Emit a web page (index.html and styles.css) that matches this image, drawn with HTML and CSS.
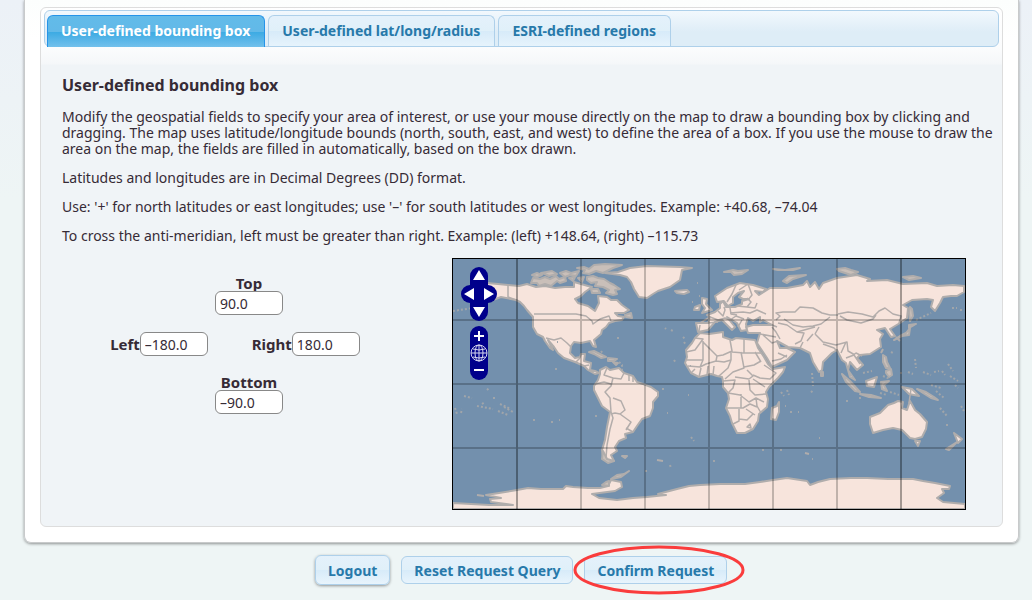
FILE: index.html
```html
<!DOCTYPE html>
<html lang="en">

<head>
    <meta charset="UTF-8">
    <meta name="viewport" content="width=device-width, initial-scale=1.0">
    <title>Geospatial Request</title>
    <link rel="stylesheet" href="styles.css">
</head>

<body>
    <main class="content">
        <div class="tabs">
            <nav class="tab-nav">
                <a class="tab active" href="#bbox">User-defined bounding box</a>
                <a class="tab" href="#radius">User-defined lat/long/radius</a>
                <a class="tab" href="#regions">ESRI-defined regions</a>
            </nav>

            <section class="tab-panel" id="bbox">
                <h3>User-defined bounding box</h3>
                <p>Modify the geospatial fields to specify your area of interest, or use your mouse directly on the map to draw a bounding box by clicking and dragging. The map uses latitude/longitude bounds (north, south, east, and west) to define the area of a box. If you use the mouse to draw the area on the map, the fields are filled in automatically, based on the box drawn.</p>
                <p>Latitudes and longitudes are in Decimal Degrees (DD) format.</p>
                <p>Use: '+' for north latitudes or east longitudes; use '–' for south latitudes or west longitudes. Example: +40.68, –74.04</p>
                <p>To cross the anti-meridian, left must be greater than right. Example: (left) +148.64, (right) –115.73</p>

                <div class="bbox-row">
                    <form class="bbox-form">
                        <div class="field stacked">
                            <label for="top">Top</label>
                            <input type="text" id="top" value="90.0">
                        </div>
                        <div class="middle">
                            <div class="field">
                                <label for="left">Left</label>
                                <input type="text" id="left" value="–180.0">
                            </div>
                            <div class="field">
                                <label for="right">Right</label>
                                <input type="text" id="right" value="180.0">
                            </div>
                        </div>
                        <div class="field stacked">
                            <label for="bottom">Bottom</label>
                            <input type="text" id="bottom" value="–90.0">
                        </div>
                    </form>

                    <div class="map">
                        <svg class="world" viewBox="0 0 512 250">
                            <rect width="512" height="250" fill="#7390ad" />
                            <g class="land">
                                <!-- North America -->
                                <path d="M17 31 L26 30 L20 28 L34 24 L45 25 L55 26 L66 27 L74 25 L83 28 L92 27 L102 29 L112 28 L121 28 L121 23 L128 25 L135 27 L139 28 L132 33 L128 37 L122 40 L125 44 L135 47 L142 52 L144 48 L146 44 L145 37 L154 38 L158 41 L164 41 L169 46 L176 51 L171 54 L162 54 L165 57 L171 58 L169 61 L162 62 L156 64 L153 68 L149 71 L148 75 L141 81 L143 88 L140 87 L137 82 L128 84 L121 83 L118 87 L117 94 L122 99 L127 98 L128 95 L132 95 L131 102 L138 104 L137 111 L142 112 L146 114 L142 115 L135 111 L131 107 L122 103 L111 99 L105 94 L101 88 L95 81 L100 91 L97 89 L92 82 L90 78 L84 75 L80 68 L80 58 L74 51 L71 47 L67 43 L63 41 L48 38 L40 41 L31 44 L23 48 L31 41 L21 37 L26 34 Z" />
                                <!-- Greenland and Iceland -->
                                <path d="M152 14 L165 13 L177 9 L194 7 L227 8 L239 9 L229 11 L227 21 L217 28 L205 32 L200 35 L194 39 L186 38 L181 30 L178 23 L174 18 L167 16 Z" />
                                <path d="M222 32 L234 31 L236 33 L231 35 L224 34 Z" />
                                <!-- South America -->
                                <path d="M147 111 L153 108 L157 111 L166 109 L171 114 L180 117 L184 123 L190 125 L198 128 L205 133 L205 137 L200 143 L200 149 L197 157 L189 160 L184 167 L180 173 L172 175 L173 179 L166 182 L162 188 L164 192 L158 196 L161 202 L155 202 L150 198 L149 191 L152 181 L154 168 L157 153 L149 147 L146 141 L141 131 L141 127 L145 121 L147 115 Z" />
                                <!-- Africa -->
                                <path d="M247 74 L256 75 L270 73 L270 78 L279 81 L283 79 L302 81 L305 89 L311 98 L315 105 L320 110 L332 108 L330 113 L325 119 L316 128 L313 133 L315 140 L314 148 L306 155 L305 162 L300 170 L292 174 L284 174 L279 164 L277 157 L273 149 L276 140 L275 134 L270 128 L270 122 L269 118 L264 117 L258 115 L246 118 L238 114 L232 104 L234 98 L233 91 L239 84 L242 79 Z" />
                                <path d="M326 143 L324 147 L319 149 L318 160 L323 161 L326 153 Z" />
                                <!-- Eurasia -->
                                <path d="M243 64 L255 64 L257 58 L254 56 L262 53 L267 49 L267 45 L270 42 L273 48 L282 48 L289 45 L289 42 L296 40 L290 40 L286 38 L291 32 L285 34 L280 38 L280 44 L275 47 L271 42 L264 43 L262 37 L274 29 L287 24 L300 26 L313 30 L310 33 L302 32 L306 36 L317 29 L334 29 L350 26 L354 22 L357 28 L362 23 L366 30 L370 24 L384 19 L404 16 L417 20 L414 22 L434 21 L450 25 L474 24 L484 27 L500 26 L511 27 L511 33 L504 37 L498 37 L490 38 L487 44 L482 52 L478 48 L480 41 L474 40 L459 41 L450 46 L455 49 L454 59 L447 64 L437 70 L442 77 L438 78 L434 72 L432 69 L424 71 L430 75 L427 80 L428 88 L417 95 L407 96 L404 99 L410 106 L404 111 L397 103 L395 111 L402 121 L397 118 L393 104 L389 101 L384 91 L379 94 L370 103 L369 111 L366 113 L360 103 L357 94 L347 89 L335 88 L324 82 L327 89 L334 89 L342 93 L334 101 L319 108 L314 99 L304 84 L307 74 L295 74 L293 68 L300 66 L319 66 L310 61 L307 63 L307 58 L300 62 L295 59 L293 65 L294 71 L288 72 L284 64 L274 58 L282 68 L279 71 L269 61 L262 63 L255 71 L245 73 Z" />
                                <!-- Australia and neighbours -->
                                <path d="M417 158 L422 156 L427 154 L435 146 L441 144 L445 142 L450 143 L449 149 L454 151 L457 142 L462 151 L467 155 L474 163 L473 170 L469 178 L462 180 L457 179 L449 171 L440 169 L430 171 L420 174 L417 165 Z" />
                                <path d="M462 182 L467 182 L465 187 Z M449 128 L459 130 L466 137 L456 135 Z M413 122 L424 118 L421 128 L414 127 Z" />
                                <path d="M501 174 L509 180 L505 184 Z M504 183 L496 191 L493 190 Z" />
                                <!-- Britain and Ireland -->
                                <path d="M249 39 L254 40 L253 45 L259 51 L249 54 L252 49 L249 45 Z M242 48 L247 46 L246 51 L241 51 Z" />
                                <!-- Antarctica -->
                                <path d="M0 244 L36 246 L60 246 L38 243 L37 240 L48 239 L33 236 L46 234 L64 231 L75 229 L88 230 L110 230 L113 227 L120 228 L135 229 L147 229 L155 227 L158 221 L168 223 L169 228 L162 232 L139 235 L146 239 L164 241 L180 239 L194 238 L213 236 L205 235 L224 230 L236 227 L247 226 L267 225 L292 225 L307 223 L320 221 L334 219 L354 222 L357 226 L365 223 L377 220 L398 219 L414 219 L435 220 L460 220 L470 222 L482 224 L497 227 L496 230 L489 230 L491 234 L484 239 L490 243 L512 245 L512 250 L0 250 Z" />
                            </g>
                            <!-- Arctic islands and archipelagos, mostly coastline at this scale -->
                            <g class="isles">
                                <path d="M78 24 L80 19 L87 20 L92 18 L97 20 L103 17 L106 20 L112 18 L113 22 L107 24 L104 22 L98 27 L92 25 L86 27 L84 24 Z M79 16 L84 14 L89 16 L84 18 Z M88 14 L99 12 L104 15 L96 17 L92 15 Z M107 14 L113 12 L118 14 L126 12 L123 17 L117 16 L112 18 Z M124 9 L131 8 L136 10 L141 6 L152 5 L169 6 L160 9 L150 14 L143 12 L136 15 L130 14 L132 11 Z M116 19 L122 18 L120 22 Z M125 19 L131 18 L129 23 Z M134 18 L140 17 L145 19 L151 20 L157 24 L161 26 L167 30 L162 31 L164 35 L160 36 L153 34 L156 31 L150 28 L142 27 L144 23 L138 24 L134 21 Z M138 30 L145 30 L147 34 L139 34 Z" />
                                <path d="M160 103 L165 104 L163 106 Z M136 93 L141 92 L147 95 L153 98 L148 99 L141 95 Z M155 99 L164 100 L161 102 L155 102 Z M172 56 L178 54 L179 59 L173 58 Z" />
                                <path d="M271 13 L280 11 L285 12 L295 11 L289 15 L281 16 L278 13 Z M330 22 L336 17 L353 16 L340 20 L334 24 Z M320 10 L332 11 L347 9 L340 11 L325 11 Z M384 10 L392 9 L398 11 L405 13 L398 16 L386 12 Z M450 18 L460 17 L468 19 L456 21 Z" />
                                <path d="M457 48 L459 50 L460 57 L457 62 L456 54 Z M456 66 L463 65 L456 69 Z M457 69 L456 76 L449 77 L441 81 L447 77 L453 74 Z M389 115 L397 122 L407 133 L402 132 L393 123 Z M407 135 L418 136 L428 139 L416 138 Z M428 123 L436 122 L431 126 L434 132 L429 130 Z M430 96 L433 98 L434 103 L437 109 L433 109 L430 103 Z M433 112 L438 110 L439 116 L436 118 L433 114 Z M464 130 L473 133 L481 138 L485 141 L478 139 L470 134 Z M368 113 L370 113 L370 117 L368 117 Z" />
                                <path d="M150 192 L154 200 L161 202 L155 204 L149 200 Z M169 197 L174 197 L172 199 Z M158 220 L164 216 L171 215 L176 212 L168 218 Z M149 226 L153 223 L156 222 L156 227 Z M204 201 L210 202 M352 194 L356 195 M24 236 L31 237 M443 78 L447 82 M428 94 L430 90" />
                            </g>
                            <g class="scatter">
                                <path d="M11 137 L19 139 M24 147 L40 150 M47 145 L58 150 M51 148 L60 153 M45 152 L55 156 M2 149 L4 155 M8 154 L9 150 M29 145 L32 143 M34 131 L36 129 M80 161 h2 M98 163 h2 M106 161 h1 M142 157 h3 M102 110 h2 M40 139 h3" />
                                <path d="M212 69 l1 1 M218 71 l2 1 M230 78 l2 2 M231 83 l2 3 M221 101 l2 3 M237 107 h1 M164 79 h2 M104 83 h1 M244 24 h1 M246 37 h1 M239 43 h1 M0 52 L20 49 M499 49 h5 M507 51 h4 M148 92 l2 3 M166 103 l3 3 l0 5" />
                                <path d="M438 93 l2 1 M462 100 l1 9 M447 114 h3 M455 113 l5 2 M470 113 l8 3 M481 113 l5 -1 M489 112 l3 4 M495 105 l5 7 M497 117 l8 5 M502 126 l3 3 M478 126 l10 3 M483 132 l8 7 M487 149 l7 8 M508 147 l3 5 M493 166 h2 M359 114 l1 13 M358 132 l2 2 M334 131 l2 5 M328 133 l3 4 M337 153 h2 M345 153 h1 M332 147 h1 M393 142 h2 M406 139 h2 M327 191 h3 M309 191 h2 M359 200 h1 M238 178 l3 4 M260 202 h2 M366 179 h1 M217 206 l1 3 M192 212 h2 M214 154 h1 M235 136 h1 M209 130 h3 M410 114 l9 -2 M427 134 l7 2 M437 133 l9 3 M430 117 l7 3 M463 61 L478 54" />
                            </g>
                            <!-- Country borders -->
                            <g class="borders">
                                <path d="M55 26 V38 L63 41 M81 55 H123 L133 57 L139 62 L140 65 L147 60 L156 57 L158 62 M93 79 L101 81 L108 79 L114 84 L118 88 M123 103 L127 99 M131 107 L136 106" />
                                <path d="M154 109 L151 116 L160 119 L158 127 L152 133 L157 139 L158 153 L160 159 L157 170 L154 186 L153 199 M142 125 L151 123 L158 125 M160 139 L168 142 L172 151 L167 155 L162 154 L158 155 M167 155 L178 163 L173 171 M171 114 L168 120 L160 119 M176 116 L176 122 M180 117 L180 123 M173 169 L180 173" />
                                <path d="M242 79 L250 80 L242 91 L233 93 M250 83 L264 97 L270 96 L279 92 L277 81 M291 80 V94 L279 93 M291 94 H309 M250 82 V101 L234 101 M250 101 L247 108 L235 107 M264 97 L263 102 L253 105 L247 108 M263 102 L271 103 L278 101 L278 93 M278 101 L275 109 L266 117 M288 93 L291 109 L280 113 L272 120 M291 108 L301 106 L308 102 M302 93 L308 103 M294 111 L300 117 L296 120 L282 118 M311 106 L323 114 L317 120 L307 119 L300 116 M300 120 L312 128 M296 121 L297 131 L302 136 L313 135 M270 122 L282 121 L280 129 L275 134 L287 136 L296 143 L303 139 L311 143 M273 149 H290 L297 145 L304 148 M286 150 V162 L280 165 M286 160 L294 161 L300 155 M293 150 L302 156 M288 135 V149 M303 139 L304 147 L308 154 M246 118 L248 109 M254 116 L255 107 M260 116 L261 107 M238 114 L242 110 M294 168 L297 165 L298 169 Z" />
                                <path d="M257 58 L247 64 M257 58 L265 61 L272 59 L277 61 L283 57 L291 60 M265 52 L270 57 L272 51 L271 48 M277 49 L278 55 L284 56 M277 54 L290 53 L297 54 L304 51 L313 55 M284 47 L294 48 L298 43 L294 39 M294 48 L302 49 L304 44 M295 25 L299 36 L295 41 M283 26 L279 35 L274 43 M295 25 L286 31 M289 61 L285 68 M247 66 L246 72 M255 64 L265 63 M317 65 L324 68 M319 68 L323 73 L327 80" />
                                <path d="M323 61 L327 57 L323 54 L330 53 L342 53 L347 48 L360 49 L369 54 L377 56 L385 56 M385 55 L395 53 L409 55 L420 58 L426 52 L432 49 L440 55 L448 57 L446 64 M387 57 L394 61 L408 64 L420 60 L423 56 M377 58 L368 65 L360 67 L350 68 L340 66 L331 60 M325 64 L334 66 L344 73 L351 74 L348 82 L342 85 M344 73 L362 68 M360 75 L354 82 M362 75 L370 83 L383 86 L394 83 L395 92 L402 96 M362 75 L366 68 M370 85 L381 89 L384 92 M393 83 L388 94 M393 99 L401 96 L407 105 M399 97 L403 94 L409 97 M307 75 L323 78 M310 76 L319 84 L325 82 M325 94 L334 98 M319 102 L328 100 L334 96 M456 144 L458 130 M350 83 L347 89" />
                            </g>
                            <!-- Graticule, every 45 degrees -->
                            <path class="grid" d="M64 0 V250 M128 0 V250 M192 0 V250 M256 0 V250 M320 0 V250 M384 0 V250 M448 0 V250 M0 61 H512 M0 125 H512 M0 189 H512" />
                            <path class="grid edge" d="M64 0 V250 M448 0 V250" />

                            <!-- Pan control -->
                            <g class="control">
                                <rect x="17" y="8" width="18" height="54" rx="9" />
                                <rect x="8" y="26" width="36" height="18" rx="9" />
                                <path class="mark" d="M26 11 L32 21 H20 Z M26 58 L32 48 H20 Z M11 35 L21 29 V41 Z M41 35 L31 29 V41 Z" />
                            </g>
                            <!-- Zoom control -->
                            <g class="control">
                                <rect x="17" y="67" width="18" height="54" rx="9" />
                                <path class="mark" d="M25 72 h2 v4 h4 v2 h-4 v4 h-2 v-4 h-4 v-2 h4 Z M21 110 h10 v2 h-10 Z" />
                                <g class="globe">
                                    <circle cx="26" cy="94" r="8" />
                                    <ellipse cx="26" cy="94" rx="4" ry="8" />
                                    <path d="M26 86 V102 M18 94 H34 M20 90 Q26 92 32 90 M20 98 Q26 100 32 98" />
                                </g>
                            </g>
                        </svg>
                    </div>
                </div>
            </section>
        </div>
    </main>

    <footer class="actions">
        <button type="button" class="btn raised">Logout</button>
        <button type="button" class="btn">Reset Request Query</button>
        <div class="confirm">
            <button type="button" class="btn">Confirm Request</button>
            <svg class="ring" viewBox="0 0 172 50">
                <ellipse cx="86" cy="25" rx="84" ry="23" />
            </svg>
        </div>
    </footer>
</body>

</html>
```
FILE: styles.css
```css
* {
    box-sizing: border-box;
}

body {
    margin: 0;
    font-family: "Noto Sans", "Open Sans", sans-serif;
    font-size: 14px;
    line-height: 16px;
    color: #362b36;
    background: linear-gradient(#ecf1f7, #eef5f5 200px);
}

.content {
    margin: 0 13px 0 24px;
    padding: 7px 15px 15px;
    background: linear-gradient(#fcfefd, #fff 40px);
    border: 1px solid #c8cacb;
    border-top: none;
    border-radius: 0 0 7px 7px;
    box-shadow: 0 1px 3px rgba(0, 0, 0, 0.4);
}

.tabs {
    padding: 2px 3px 16px;
    border: 1px solid #dddddd;
    border-radius: 6px;
    background: linear-gradient(#fff, #fbfcfd 40px, #f5f7f9 56px, #f0f4f7 57px);
}

.tab-nav {
    display: flex;
    gap: 3px;
    height: 37px;
    padding: 4px 2px 0;
    border: 1px solid #aed0ea;
    border-radius: 6px;
    background: linear-gradient(#f2f8fd, #deedf7 60%);
}

.tab {
    height: 31px;
    padding: 7px 14px 0 13px;
    border: 1px solid #aed0ea;
    border-bottom: none;
    border-radius: 6px 6px 0 0;
    background: linear-gradient(#e4f1fb, #e0f0f9 50%, #d7ebf9 51%, #e6f3fc);
    color: #2779aa;
    font-weight: bold;
    text-decoration: none;
    white-space: nowrap;
}

.tab.active {
    height: 32px;
    border-color: #2694e8;
    background: linear-gradient(#62bbe9, #62b9e8 50%, #3baae3 51%, #72c0ec);
    color: #fff;
}

.tab-panel {
    padding: 28px 2px 0 18px;
}

h3 {
    margin: 0 0 14px;
    font-size: 16px;
    line-height: 20px;
}

p {
    margin: 0 0 13px;
}

.bbox-row {
    display: flex;
    justify-content: space-between;
    padding: 1px 31px 0 0;
}

.bbox-form {
    width: 374px;
    padding-top: 17px;
}

.field {
    display: flex;
    align-items: center;
    font-size: 15px;
    font-weight: bold;
}

.stacked {
    flex-direction: column;
}

.middle {
    display: flex;
    justify-content: center;
    gap: 44px;
    margin: 17px 0 18px;
    padding-right: 28px;
}

input {
    width: 68px;
    height: 24px;
    padding: 0 4px;
    border: 1px solid #888;
    border-radius: 6px;
    background: #fff;
    color: #362b36;
    font-family: inherit;
    font-size: 14px;
}

.map {
    flex: 0 1 514px;
    border: 1px solid #000;
}

.world {
    display: block;
    width: 100%;
}

.land {
    fill: #f7e4dc;
    stroke: #b0adac;
    stroke-width: 2;
    stroke-linejoin: round;
}

.isles {
    fill: #c9bfb9;
    stroke: #b0adac;
    stroke-width: 2;
    stroke-linejoin: round;
}

.scatter {
    fill: none;
    stroke: #a0a5aa;
    stroke-width: 2;
    stroke-dasharray: 2 2;
}

.borders {
    fill: none;
    stroke: #b3adab;
    stroke-width: 1.5;
    stroke-linejoin: round;
}

.grid {
    fill: none;
    stroke: #000;
    stroke-opacity: 0.22;
    stroke-width: 2;
}

.edge {
    stroke-opacity: 0.15;
}

.control {
    fill: #00008b;
}

.mark {
    fill: #fff;
}

.globe {
    fill: none;
    stroke: #d8d8f0;
    stroke-width: 1;
}

.actions {
    display: flex;
    align-items: center;
    gap: 11px;
    padding: 12px 0 15px 315px;
}

.btn {
    height: 28px;
    padding: 0 12px;
    border: 1px solid #aed0ea;
    border-radius: 6px;
    background: linear-gradient(#e4f1fb, #e0f0f9 50%, #d7ebf9 51%, #e8f4fc);
    color: #2779aa;
    font-family: inherit;
    font-size: 14px;
    font-weight: bold;
    white-space: nowrap;
    cursor: pointer;
}

.raised {
    height: 30px;
    box-shadow: 0 1px 3px rgba(0, 0, 0, 0.4);
}

.confirm {
    position: relative;
}

/* Highlight drawn over the confirm button */
.ring {
    position: absolute;
    top: 50%;
    left: 52%;
    width: 172px;
    transform: translate(-50%, -50%);
    pointer-events: none;
}

.ring ellipse {
    fill: none;
    stroke: #fa3c3c;
    stroke-width: 3;
}
```
